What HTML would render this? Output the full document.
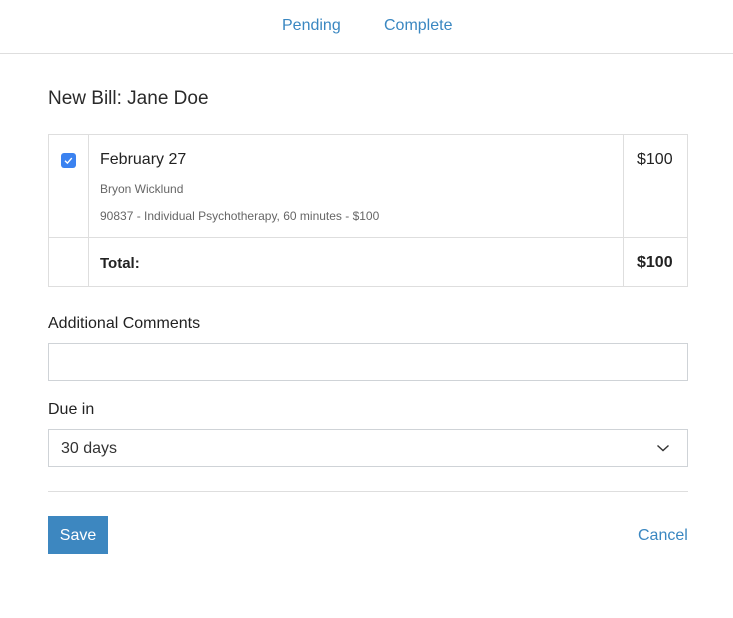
<!DOCTYPE html>
<html><head><style>
*{box-sizing:border-box;margin:0;padding:0}
body{width:733px;height:618px;background:#fff;font-family:"Liberation Sans",sans-serif;color:#222;position:relative;overflow:hidden}
.abs{position:absolute;white-space:nowrap}
.link{color:#3a87c1;font-size:16px}
.line{position:absolute;background:#dedede}
</style></head><body>
<div class="abs link" style="left:282px;top:17px">Pending</div>
<div class="abs link" style="left:384px;top:17px">Complete</div>
<div class="line" style="left:0;top:53px;width:733px;height:1px"></div>
<div class="abs" style="left:48px;top:88px;font-size:19px;color:#2a2a2a">New Bill: Jane Doe</div>
<div style="position:absolute;left:48px;top:134px;width:640px;height:153px;border:1px solid #dedede"></div>
<div class="line" style="left:88px;top:134px;width:1px;height:153px"></div>
<div class="line" style="left:623px;top:134px;width:1px;height:153px"></div>
<div class="line" style="left:48px;top:237px;width:640px;height:1px"></div>
<div style="position:absolute;left:61px;top:153px;width:15px;height:15px;border-radius:3px;background:#3b82f0"><svg width="15" height="15"><path d="M4 7.7l2.4 2.4 4.4-5" stroke="#fff" stroke-width="1.4" fill="none"/></svg></div>
<div class="abs" style="left:100px;top:151px;font-size:16px">February 27</div>
<div class="abs" style="left:100px;top:182px;font-size:12px;color:#666">Bryon Wicklund</div>
<div class="abs" style="left:100px;top:209px;font-size:12px;color:#666">90837 - Individual Psychotherapy, 60 minutes - $100</div>
<div class="abs" style="left:637px;top:151px;font-size:16px">$100</div>
<div class="abs" style="left:100px;top:255px;font-size:15px;font-weight:bold">Total:</div>
<div class="abs" style="left:637px;top:254px;font-size:16px;font-weight:bold">$100</div>
<div class="abs" style="left:48px;top:315px;font-size:16px">Additional Comments</div>
<div style="position:absolute;left:48px;top:343px;width:640px;height:38px;border:1px solid #cfd3d7"></div>
<div class="abs" style="left:48px;top:401px;font-size:16px">Due in</div>
<div style="position:absolute;left:48px;top:429px;width:640px;height:38px;border:1px solid #cfd3d7"></div>
<div class="abs" style="left:61px;top:440px;font-size:16px;color:#333">30 days</div>
<svg class="abs" style="left:656px;top:443px" width="14" height="10"><path d="M1.5 2.5l5.5 5 5.5-5" stroke="#333" stroke-width="1.4" fill="none"/></svg>
<div class="line" style="left:48px;top:491px;width:640px;height:1px"></div>
<div style="position:absolute;left:48px;top:516px;width:60px;height:38px;background:#3d87c0;color:#fff;font-size:16px;text-align:center;line-height:40px">Save</div>
<div class="abs link" style="left:638px;top:527px">Cancel</div>
</body></html>
